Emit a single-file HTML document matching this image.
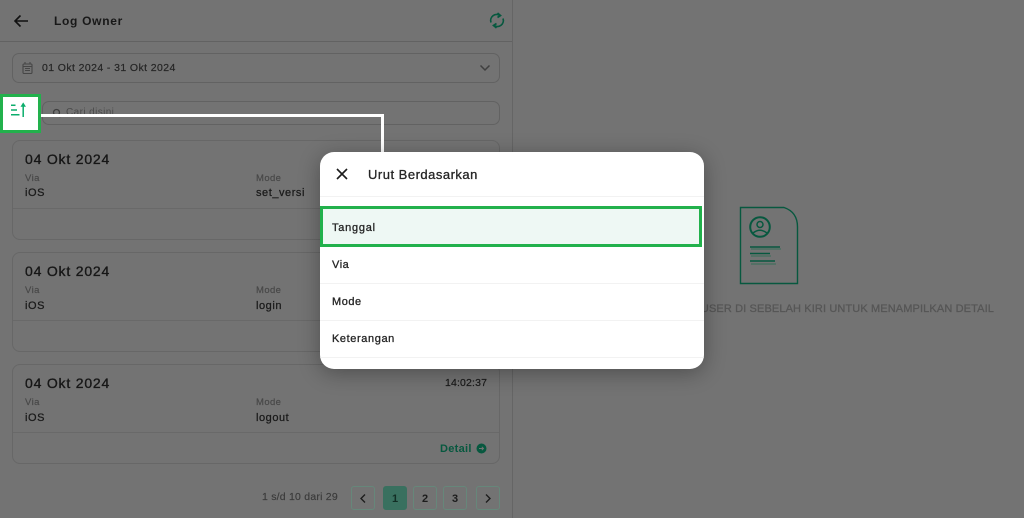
<!DOCTYPE html>
<html><head><meta charset="utf-8">
<style>
html,body{margin:0;padding:0;width:1024px;height:518px;overflow:hidden;background:#737373}
*{box-sizing:border-box}
body{font-family:"Liberation Sans",sans-serif;position:relative;color:#1d1d1d}
.a{position:absolute;white-space:nowrap}
.box{position:absolute;border:1px solid #626262;border-radius:7px}
.card{position:absolute;left:12px;width:488px;border:1px solid #676767;border-radius:8px}
.date{font-size:14px;letter-spacing:.8px;color:#171717;-webkit-text-stroke:.35px #171717}
.lab{font-size:9.5px;letter-spacing:.4px;color:#474747;-webkit-text-stroke:.15px #474747}
.val{font-size:11px;letter-spacing:.55px;color:#1a1a1a;-webkit-text-stroke:.25px #1a1a1a}
.pg{position:absolute;top:486px;width:24px;height:24px;border:1px solid #66877a;border-radius:3px;text-align:center;font-size:11px;line-height:25px;font-weight:bold;color:#1c1c1c}
.pg svg{position:absolute;left:7px;top:6px}
.row{position:absolute;left:0;width:384px;height:1px;background:#f2f2f2}
.it{position:absolute;left:12px;font-size:11px;letter-spacing:.55px;color:#252525;-webkit-text-stroke:.3px #252525;white-space:nowrap}
</style></head><body>
<div class="a" style="left:512px;top:0;width:1px;height:518px;background:#656565"></div>
<div class="a" style="left:0;top:41px;width:512px;height:1px;background:#626262"></div>
<svg class="a" style="left:13px;top:13px" width="16" height="16" viewBox="0 0 16 16" fill="none" stroke="#111" stroke-width="1.600"><path d="M15 8H2M7.500 2.500 2 8l5.500 5.500"/></svg>
<div class="a" style="left:54px;top:14px;font-size:12px;font-weight:bold;letter-spacing:.7px;color:#181818">Log Owner</div>
<svg class="a" style="left:489px;top:12px" width="16" height="17" viewBox="0 0 16 17" fill="none" stroke="#07583f" stroke-width="1.700"><path d="M2 10.500A6 6 0 0 1 11 3.500M14 6.500A6 6 0 0 1 5 13.500"/><path d="M8.500 1 11.500 3.500 8.500 5.500M7.500 11.500 4.500 13.500 7.500 16"/></svg>

<div class="box" style="left:12px;top:53px;width:488px;height:30px"></div>
<svg class="a" style="left:22px;top:62px" width="11" height="12" viewBox="0 0 11 12" fill="none" stroke="#464646" stroke-width="1.100"><rect x="1" y="2" width="9" height="9.500" rx="1"/><path d="M1 4.500h9M3 6.500h5M3 8.500h5M3 0v2M8 0v2"/></svg>
<div class="a" style="left:42px;top:62px;font-size:10.500px;letter-spacing:.4px;color:#262626;-webkit-text-stroke:.2px #262626">01 Okt 2024 - 31 Okt 2024</div>
<svg class="a" style="left:479px;top:64px" width="12" height="8" viewBox="0 0 12 8" fill="none" stroke="#3f3f3f" stroke-width="1.500"><path d="M1.500 1.500 6 6l4.500-4.500"/></svg>

<div class="box" style="left:42px;top:101px;width:458px;height:24px"></div>
<svg class="a" style="left:52px;top:108px" width="10" height="11" viewBox="0 0 10 11" fill="none" stroke="#3f3f3f" stroke-width="1.300"><circle cx="4.500" cy="4.500" r="3"/><path d="M6.500 7l2 2"/></svg>
<div class="a" style="left:66px;top:107px;font-size:10px;letter-spacing:.4px;color:#4a4a4a;height:8px;overflow:hidden">Cari disini</div>

<div class="card" style="top:140px;height:100px"></div>
<div class="a" style="left:13px;top:208px;width:486px;height:1px;background:#696969"></div>
<div class="a date" style="left:25px;top:151px">04 Okt 2024</div>
<div class="a lab" style="left:25px;top:173px">Via</div>
<div class="a val" style="left:25px;top:187px">iOS</div>
<div class="a lab" style="left:256px;top:173px">Mode</div>
<div class="a val" style="left:256px;top:187px">set_versi</div>

<div class="card" style="top:252px;height:100px"></div>
<div class="a" style="left:13px;top:320px;width:486px;height:1px;background:#696969"></div>
<div class="a date" style="left:25px;top:263px">04 Okt 2024</div>
<div class="a lab" style="left:25px;top:285px">Via</div>
<div class="a val" style="left:25px;top:300px">iOS</div>
<div class="a lab" style="left:256px;top:285px">Mode</div>
<div class="a val" style="left:256px;top:300px">login</div>

<div class="card" style="top:364px;height:100px"></div>
<div class="a" style="left:13px;top:432px;width:486px;height:1px;background:#696969"></div>
<div class="a date" style="left:25px;top:375px">04 Okt 2024</div>
<div class="a" style="left:445px;top:377px;font-size:10.500px;letter-spacing:.15px;color:#1a1a1a;-webkit-text-stroke:.2px #1a1a1a">14:02:37</div>
<div class="a lab" style="left:25px;top:397px">Via</div>
<div class="a val" style="left:25px;top:412px">iOS</div>
<div class="a lab" style="left:256px;top:397px">Mode</div>
<div class="a val" style="left:256px;top:412px">logout</div>
<div class="a" style="left:440px;top:443px;font-size:11px;font-weight:bold;letter-spacing:.3px;color:#07583f">Detail</div>
<svg class="a" style="left:476px;top:443px" width="11" height="11" viewBox="0 0 11 11"><circle cx="5.500" cy="5.500" r="5" fill="#07583f"/><path d="M3 5.500h4.500M5.800 3.800l1.700 1.700-1.700 1.700" stroke="#737373" fill="none"/></svg>

<div class="a" style="left:262px;top:491px;font-size:10.500px;letter-spacing:.22px;color:#3a3a3a;-webkit-text-stroke:.15px #3a3a3a">1 s/d 10 dari 29</div>
<div class="pg" style="left:351px"><svg width="8" height="11" viewBox="0 0 8 11" fill="none" stroke="#1c1c1c" stroke-width="1.400"><path d="M6 1.500 2 5.500l4 4"/></svg></div>
<div class="pg" style="left:383px;background:#39705f;border-color:#39705f;color:#122e25">1</div>
<div class="pg" style="left:413px">2</div>
<div class="pg" style="left:443px">3</div>
<div class="pg" style="left:476px"><svg width="8" height="11" viewBox="0 0 8 11" fill="none" stroke="#1c1c1c" stroke-width="1.400"><path d="m2 1.500 4 4-4 4"/></svg></div>

<svg class="a" style="left:738px;top:206px" width="62" height="80" viewBox="0 0 62 80" fill="none" stroke="#07583f"><path d="M2.500 1.500H46Q59.500 6 59.500 21V77.500H2.500Z" stroke-width="1.400"/><circle cx="22" cy="21" r="9.800" stroke-width="2"/><circle cx="22" cy="18.500" r="3" stroke-width="1.500"/><path d="M15 27Q22 21.500 29 27" stroke-width="1.500"/><path d="M13 43H43M13 50H33M13 58H38" stroke="#4a6f61" stroke-width="1.500"/><path d="M12 41H42M12 47.500H32M12 55H37" stroke-width="1.500"/></svg>
<div class="a" style="left:600px;top:303px;width:394px;text-align:right;font-size:11px;letter-spacing:.12px;color:#565656;-webkit-text-stroke:.3px #565656">PILIH USER DI SEBELAH KIRI UNTUK MENAMPILKAN DETAIL</div>

<div class="a" style="left:38px;top:113.500px;width:346px;height:3.500px;background:#fff"></div>
<div class="a" style="left:380.500px;top:113.500px;width:3.500px;height:40px;background:#fff"></div>

<div class="a" style="left:0;top:94px;width:41px;height:39px;background:#fff;border:3px solid #22b14c"></div>
<svg class="a" style="left:9px;top:101px" width="20" height="18" viewBox="0 0 20 18" fill="none" stroke="#0cae6c" stroke-width="1.500"><path d="M2 4.200h4.500M2 9h6M2 13.800h8.500M14.200 16V4"/><path d="M12 5.500 14.200 2 16.400 5.500Z" fill="#0cae6c" stroke-width=".6"/></svg>

<div class="a" style="left:320px;top:152px;width:384px;height:217px;background:#fff;border-radius:14px;box-shadow:0 4px 22px rgba(0,0,0,.32);overflow:hidden">
 <svg class="a" style="left:15px;top:15px" width="14" height="14" viewBox="0 0 14 14" fill="none" stroke="#1c1c1c" stroke-width="1.600"><path d="M2 2l10 10M12 2 2 12"/></svg>
 <div class="a" style="left:48px;top:15px;font-size:13px;letter-spacing:.5px;color:#252525;-webkit-text-stroke:.3px #252525">Urut Berdasarkan</div>
 <div class="row" style="top:44px"></div>
 <div class="a" style="left:0;top:54px;width:382px;height:41px;background:#eef8f4;border:3px solid #22b14c"></div>
 <div class="it" style="top:70px;letter-spacing:.75px">Tanggal</div>
 <div class="it" style="top:107px">Via</div>
 <div class="row" style="top:131px"></div>
 <div class="it" style="top:144px">Mode</div>
 <div class="row" style="top:168px"></div>
 <div class="it" style="top:181px;letter-spacing:.6px">Keterangan</div>
 <div class="row" style="top:205px"></div>
</div>
</body></html>
